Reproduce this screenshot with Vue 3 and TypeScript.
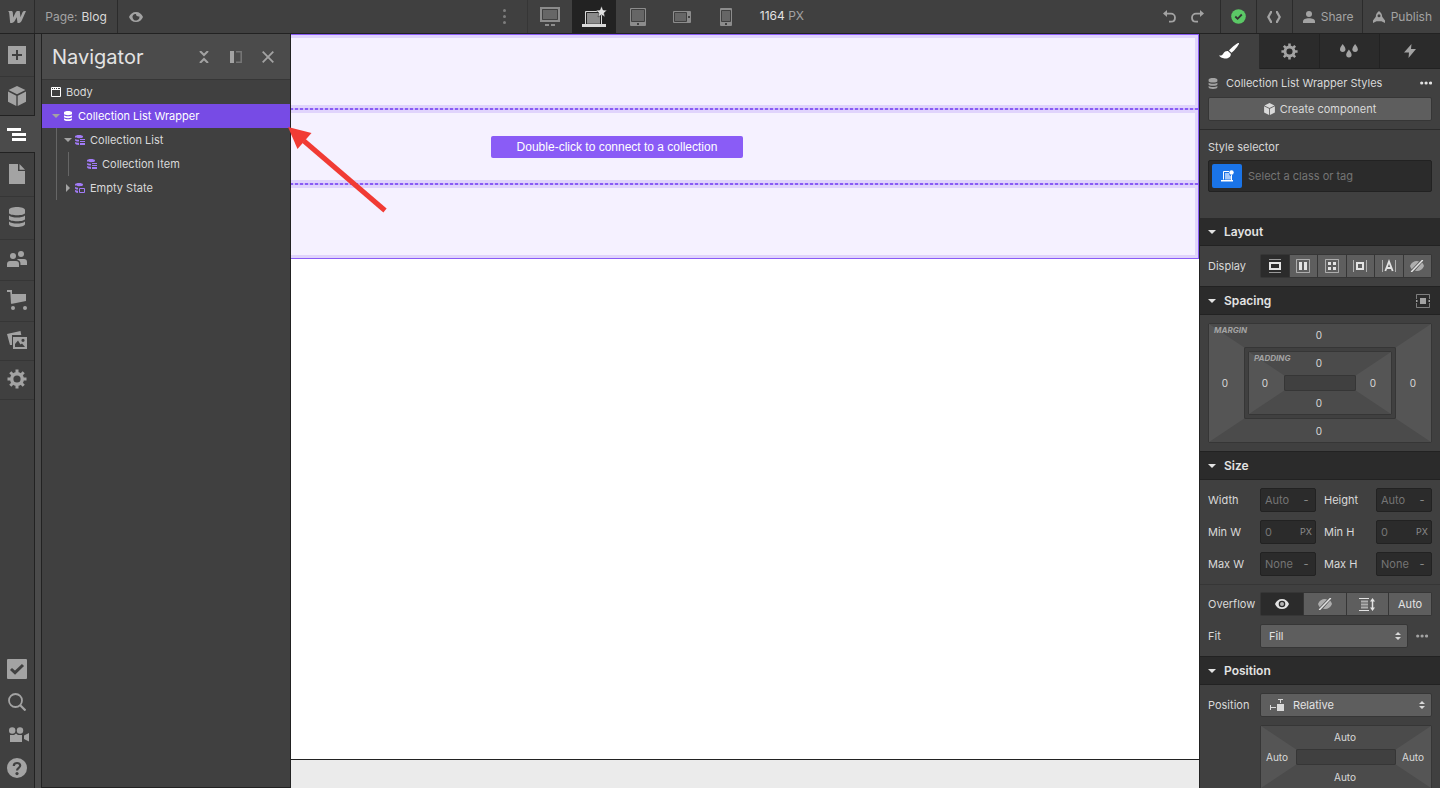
<script setup lang="ts">
import { ref } from 'vue'

interface Icon { id: string; label: string; w: number; h: number; cell?: string }
interface SizeField { label: string; value: string; unit: string }

const railTop: Icon[] = [
  { id: 'plus', label: 'Add elements', w: 18, h: 18, cell: 'h43' },
  { id: 'cube', label: 'Components', w: 18, h: 20, cell: 'h39' },
  { id: 'nav', label: 'Navigator', w: 20, h: 13, cell: 'h37' },
  { id: 'page', label: 'Pages', w: 16, h: 20, cell: 'h43 raised tall' },
  { id: 'db', label: 'CMS collections', w: 16, h: 20, cell: 'h43 raised' },
  { id: 'users', label: 'Users', w: 20, h: 16, cell: 'h41 raised' },
  { id: 'cart', label: 'Ecommerce', w: 20, h: 20, cell: 'h41 raised' },
  { id: 'images', label: 'Assets', w: 20, h: 18, cell: 'h39 raised' },
  { id: 'gear', label: 'Settings', w: 20, h: 20, cell: 'h39 raised' },
]
const railBottom: Icon[] = [
  { id: 'audit', label: 'Audit', w: 20, h: 20 },
  { id: 'search', label: 'Search', w: 18, h: 18 },
  { id: 'video', label: 'Tutorials', w: 20, h: 16 },
  { id: 'help', label: 'Help', w: 20, h: 20 },
]
const devices: Icon[] = [
  { id: 'desktop', label: 'Desktop', w: 20, h: 19 },
  { id: 'laptop', label: 'Base breakpoint', w: 26, h: 22 },
  { id: 'tablet', label: 'Tablet', w: 16, h: 18 },
  { id: 'landscape', label: 'Mobile landscape', w: 18, h: 12 },
  { id: 'phone', label: 'Mobile portrait', w: 12, h: 18 },
]
const tabs: Icon[] = [
  { id: 'brush', label: 'Style', w: 20, h: 16 },
  { id: 'gear', label: 'Element settings', w: 17, h: 17 },
  { id: 'drops', label: 'Style manager', w: 18, h: 14 },
  { id: 'bolt', label: 'Interactions', w: 12, h: 14 },
]
const displays: Icon[] = [
  { id: 'd-block', label: 'Block', w: 14, h: 14 },
  { id: 'd-flex', label: 'Flex', w: 14, h: 14 },
  { id: 'd-grid', label: 'Grid', w: 14, h: 14 },
  { id: 'd-inline-block', label: 'Inline block', w: 14, h: 14 },
  { id: 'd-inline', label: 'Inline', w: 14, h: 14 },
  { id: 'eye-off', label: 'None', w: 14, h: 12 },
]
const sizes: SizeField[] = [
  { label: 'Width', value: 'Auto', unit: '-' },
  { label: 'Height', value: 'Auto', unit: '-' },
  { label: 'Min W', value: '0', unit: 'PX' },
  { label: 'Min H', value: '0', unit: 'PX' },
  { label: 'Max W', value: 'None', unit: '-' },
  { label: 'Max H', value: 'None', unit: '-' },
]
const sides = ['top', 'right', 'bottom', 'left']

const activeRail = ref('nav')
const activeDevice = ref('laptop')
const activeTab = ref('brush')
const activeDisplay = ref('d-block')
const activeOverflow = ref('visible')
const selectedNode = ref('wrapper')
const fit = ref('Fill')
const position = ref('Relative')
</script>

<template>
  <div class="designer">
    <svg class="sprite" aria-hidden="true">
      <symbol id="logo" viewBox="0 0 18 12"><path d="M0 0h3.200c1 0 1.500.5 1.600 1.500l.4 5L7.700 1.300C8.200.3 8.900 0 9.800 0h1.900l.8 6.300L14.300 1.700C14.800.4 15.600 0 18 0L13.800 9.500c-.9 1.900-1.900 2.500-4.300 2.500L8.700 6.300 7 9.500C5.900 11.500 4.800 12 2.200 12L1.300 3C1.100 1.200.9.700 0 0z" fill="currentColor" /></symbol>
      <symbol id="eye" viewBox="0 0 14 10"><path fill-rule="evenodd" d="M7 0c3.300 0 5.800 2 7 5-1.200 3-3.700 5-7 5S1.200 8 0 5c1.200-3 3.700-5 7-5zm0 1.700a3.300 3.300 0 1 0 0 6.600 3.300 3.300 0 0 0 0-6.600z" fill="currentColor" /><circle cx="7" cy="5" r="2" fill="currentColor" opacity=".75" /></symbol>
      <symbol id="eye-top" viewBox="0 0 14 10"><path fill-rule="evenodd" d="M7 0c3.300 0 5.800 2 7 5-1.200 3-3.700 5-7 5S1.200 8 0 5c1.200-3 3.700-5 7-5zM5 2.300a3.400 3.400 0 1 0 5.300 2A2.300 2.300 0 0 1 7 2 3.400 3.400 0 0 0 5 2.300z" fill="currentColor" /></symbol>
      <symbol id="eye-off" viewBox="0 0 14 12"><path d="M0 6c1.300-3.200 4-5 7-5l3 .8L3 10.300C1.700 9.300.6 7.700 0 6zM14 6c-1.300 3.200-4 5-7 5l-2-.3L12 2.600c.9.900 1.600 2 2 3.400z" fill="currentColor" opacity=".6" /><path d="M1 12 12.500 0" stroke="#5e5e5e" stroke-width="3" /><path d="M1.200 12 12.800 0" stroke="currentColor" stroke-width="1.500" /></symbol>
      <symbol id="plus" viewBox="0 0 18 18"><path fill-rule="evenodd" d="M0 0h18v18H0zM8 4v4H4v2h4v4h2v-4h4V8h-4V4z" fill="currentColor" /></symbol>
      <symbol id="cube" viewBox="0 0 18 20"><path d="M9 0l8.400 4L9 8.200.6 4zM0 5.500l8.300 4.200V20L0 15.800zM18 5.500 9.700 9.700V20l8.300-4.200z" fill="currentColor" /></symbol>
      <symbol id="nav" viewBox="0 0 20 13"><path d="M0 0h14v3H0zM5 5h14v3H5zM5 10h14v3H5z" fill="currentColor" /></symbol>
      <symbol id="page" viewBox="0 0 16 20"><path d="M0 0h9v7h7v13H0zM10.500 0 16 5.700h-5.500z" fill="currentColor" /></symbol>
      <symbol id="db" viewBox="0 0 16 20"><path d="M0 3c0-4 16-4 16 0v3c0 3-16 3-16 0zM0 8.500c3 2.700 13 2.700 16 0V12c0 3-16 3-16 0zM0 14.500c3 2.700 13 2.700 16 0V17c0 4-16 4-16 0z" fill="currentColor" /></symbol>
      <symbol id="users" viewBox="0 0 20 16"><circle cx="6" cy="5" r="3" fill="currentColor" /><circle cx="14" cy="3" r="3" fill="currentColor" /><path d="M0 16v-3c0-2 1.500-3 3-3h6c2 0 3 1 3 3v3zM10.500 8H17c2 0 3 1 3 3v3h-6.500c0-3.500-.5-4.500-3-5z" fill="currentColor" /></symbol>
      <symbol id="cart" viewBox="0 0 20 20"><path d="M0 0h5v4h14v7L5.300 13.800H4L3.300 2H0z" fill="currentColor" /><circle cx="6" cy="18" r="2" fill="currentColor" /><circle cx="18" cy="18" r="2" fill="currentColor" /></symbol>
      <symbol id="images" viewBox="0 0 20 18"><path d="M0 3 13.500 0l.8 4H5v10H3z" fill="currentColor" /><path fill-rule="evenodd" d="M6 6h14v12H6zM8 16h10l-3-3.500-1.500 1L11 9.500 8 13zM16 7.700a1.600 1.600 0 1 0 0 3.200 1.600 1.600 0 0 0 0-3.200z" fill="currentColor" /></symbol>
      <symbol id="gear" viewBox="0 0 20 20"><circle cx="10" cy="10" r="5.300" fill="none" stroke="currentColor" stroke-width="3.400" /><path d="M10 .5V4M10 16v3.500M.5 10H4M16 10h3.500M3.300 3.300l2.400 2.400M14.300 14.300l2.400 2.400M3.300 16.700l2.400-2.400M14.300 5.700l2.400-2.400" stroke="currentColor" stroke-width="3" /></symbol>
      <symbol id="audit" viewBox="0 0 20 20"><rect width="20" height="20" rx="1" fill="currentColor" /><path d="M4 10l4 3.600L16 6" fill="none" stroke="#404040" stroke-width="3" /></symbol>
      <symbol id="search" viewBox="0 0 18 18"><circle cx="7.500" cy="7.500" r="6.500" fill="none" stroke="currentColor" stroke-width="1.800" /><path d="M12 12l5.500 5.500" stroke="currentColor" stroke-width="2.200" /></symbol>
      <symbol id="video" viewBox="0 0 20 16"><circle cx="3.200" cy="3.500" r="3.200" fill="currentColor" /><circle cx="11" cy="3.500" r="3.200" fill="currentColor" /><path d="M1 8h4l2-1.500L9 8h4v7H1zM20 6v8.500l-5-2.500V8.500z" fill="currentColor" /></symbol>
      <symbol id="help" viewBox="0 0 20 20"><circle cx="10" cy="10" r="10" fill="currentColor" /><path d="M6.800 8c0-4 6.400-3.800 6.400-.4 0 2.300-3.200 2.300-3.200 5" fill="none" stroke="#404040" stroke-width="2.200" /><circle cx="10" cy="15.600" r="1.600" fill="#404040" /></symbol>
      <symbol id="desktop" viewBox="0 0 20 19"><path d="M1 1h18v13H1z" fill="#666" stroke="currentColor" stroke-width="2" /><path d="M2.500 2.500h15v10h-15z" fill="none" stroke="#404040" /><path d="M5 17h4v2H5zM11 17h4v2h-4z" fill="currentColor" /></symbol>
      <symbol id="laptop" viewBox="0 0 26 22"><path d="M4.500 5.500h16V18h-16z" fill="#8a8a8a" stroke="#d9d9d9" /><path d="M5.500 6.500h14V18h-14z" fill="none" stroke="#222" /><path d="M1 18h24v3H1z" fill="#d9d9d9" /><path d="M20.500 0l1.600 4 3.900.3-3 2.700 1 4-3.500-2.200L17 11l1-4-3-2.700 3.900-.3z" fill="#e3e3e3" stroke="#222" stroke-width=".5" /></symbol>
      <symbol id="tablet" viewBox="0 0 16 18"><rect width="16" height="18" rx="1" fill="currentColor" /><path d="M1.500 1.500h13v12h-13z" fill="#666" stroke="#404040" /><path d="M7 15h2v2H7z" fill="#404040" /></symbol>
      <symbol id="landscape" viewBox="0 0 18 12"><rect width="18" height="12" rx="1" fill="currentColor" /><path d="M1.500 1.500h12v9h-12z" fill="#666" stroke="#404040" /><path d="M15 5h2v2h-2z" fill="#404040" /></symbol>
      <symbol id="phone" viewBox="0 0 12 18"><rect width="12" height="18" rx="1" fill="currentColor" /><path d="M1.500 2.500h9v11h-9z" fill="#666" stroke="#404040" /><path d="M5 15h2v2H5z" fill="#404040" /></symbol>
      <symbol id="undo" viewBox="0 0 13 13"><path d="M0 3.500 4 0v7z" fill="currentColor" /><path d="M3 3.700h5a4 4 0 0 1 4 4c0 2.500-1.500 4-4 4H6" fill="none" stroke="currentColor" stroke-width="1.800" /></symbol>
      <symbol id="ok" viewBox="0 0 15 15"><circle cx="7.500" cy="7.500" r="7.300" fill="#5bc866" /><path d="M4.300 7.500l2.300 2.300 4.200-4.300" fill="none" stroke="#333" stroke-width="1.800" /></symbol>
      <symbol id="code" viewBox="0 0 14 12"><path d="M5 1.200H4L1.300 6 4 10.800h1M9 1.200h1L12.700 6 10 10.800H9" fill="none" stroke="currentColor" stroke-width="2.200" /></symbol>
      <symbol id="person" viewBox="0 0 12 12"><circle cx="6" cy="3" r="3" fill="currentColor" /><path d="M0 12v-1.500C0 8.500 2.500 7.300 6 7.300s6 1.200 6 3.200V12z" fill="currentColor" /></symbol>
      <symbol id="rocket" viewBox="0 0 12 12"><path fill-rule="evenodd" d="M6 0c2 1.300 3.200 3.500 3.200 5.800L12 9.500V12L8.500 10.200h-5L0 12V9.500l2.800-3.700C2.800 3.500 4 1.300 6 0zm0 3.300a1.500 1.500 0 1 0 0 3 1.500 1.500 0 0 0 0-3z" fill="currentColor" /></symbol>
      <symbol id="collapse" viewBox="0 0 10 12"><path d="M1 0l4 4 4-4M1 12l4-4 4 4" fill="none" stroke="currentColor" stroke-width="2" /></symbol>
      <symbol id="dock" viewBox="0 0 12 12"><path d="M0 0h4v12H0z" fill="currentColor" /><path d="M6 .8h5.200v10.400H6" fill="none" stroke="currentColor" stroke-width="1.500" opacity=".5" /></symbol>
      <symbol id="close" viewBox="0 0 12 12"><path d="M.7.7l10.600 10.600M11.300.7.7 11.300" stroke="currentColor" stroke-width="1.800" /></symbol>
      <symbol id="body" viewBox="0 0 10 10"><path d="M.5.5h9v9h-9zM0 2.500h10" fill="none" stroke="currentColor" /><path d="M2 1h1v1H2zM4 1h1v1H4zM6 1h1v1H6z" fill="currentColor" /></symbol>
      <symbol id="list" viewBox="0 0 10 10"><path d="M0 1.500C0-.5 8-.5 8 1.500V2c0 1.600-8 1.600-8 0zM0 4c1 .6 2.500.8 4 .8V6.500C1.500 6.500 0 6 0 5zM0 7c1 .6 2.500.8 4 .8V10C1.500 10 0 9 0 8zM5 4h5v1H5zM5 6h5v1H5zM5 8h5v2H5z" fill="currentColor" /></symbol>
      <symbol id="empty" viewBox="0 0 10 10"><path d="M0 1.500C0-.5 8-.5 8 1.500V2c0 1.600-8 1.600-8 0zM0 4c1 .6 2 .8 3 .8V6.500C1.500 6.500 0 6 0 5zM0 7c1 .6 2 .8 3 .8V10C1.500 10 0 9 0 8z" fill="currentColor" /><path d="M4.500 5.500h5v4h-5z" fill="none" stroke="currentColor" /></symbol>
      <symbol id="brush" viewBox="0 0 20 16"><path d="M20 0c.5 1.500-5 8-7.500 9.800L10 7.500C12 5 18.500-.5 20 0zM9.200 8.200l2.600 2.500C12 14 9 16 5.500 15.500 3 15.200 1 14 0 12.500c2.500.5 3.500-.8 4.500-2.300 1.200-1.700 3-2.400 4.700-2z" fill="currentColor" /></symbol>
      <symbol id="drops" viewBox="0 0 18 14"><path id="drop" d="M2.700 0c1.500 2 2.700 3.800 2.700 5.300a2.700 2.700 0 0 1-5.400 0C0 3.800 1.200 2 2.700 0z" fill="currentColor" /><use href="#drop" x="12.400" /><use href="#drop" x="6.200" y="5.500" /></symbol>
      <symbol id="bolt" viewBox="0 0 12 14"><path d="M7.500 0 7 5h5L4.500 14 5 8.500H0z" fill="currentColor" /></symbol>
      <symbol id="class" viewBox="0 0 13 12"><path d="M2.500 9.500V1.500H8M10.500 5v5" fill="none" stroke="currentColor" /><path d="M4 3h4c0 2 .8 2.800 2 3v3.500H4z" fill="#a5c8f8" /><path d="M0 10h12v1.500H0z" fill="currentColor" /><circle cx="10.500" cy="2.500" r="2.200" fill="currentColor" /></symbol>
      <symbol id="d-block" viewBox="0 0 14 14"><path d="M1 .5h12M1 13.500h12" stroke="currentColor" opacity=".6" /><path d="M2 4h10v6H2z" fill="none" stroke="currentColor" stroke-width="2" /></symbol>
      <symbol id="d-flex" viewBox="0 0 14 14"><path d="M.5.5h13v13H.5z" fill="none" stroke="currentColor" opacity=".6" /><path d="M3 3h3v8H3zM8 3h3v8H8z" fill="currentColor" /></symbol>
      <symbol id="d-grid" viewBox="0 0 14 14"><path d="M.5.5h13v13H.5z" fill="none" stroke="currentColor" opacity=".6" /><path d="M3 3h3v3H3zM8 3h3v3H8zM3 8h3v3H3zM8 8h3v3H8z" fill="currentColor" /></symbol>
      <symbol id="d-inline-block" viewBox="0 0 14 14"><path d="M.5 1v12M13.500 1v12" stroke="currentColor" opacity=".6" /><path d="M4 4h6v6H4z" fill="none" stroke="currentColor" stroke-width="2" /></symbol>
      <symbol id="d-inline" viewBox="0 0 14 14"><path d="M.5 1v12M13.500 1v12" stroke="currentColor" opacity=".6" /><path d="M3.300 12 7 2.500 10.700 12M4.500 9h5" fill="none" stroke="currentColor" stroke-width="1.800" /></symbol>
      <symbol id="center" viewBox="0 0 14 14"><path d="M.5 5V.5h13V5M.5 9v4.500h13V9" fill="none" stroke="currentColor" opacity=".7" /><path d="M4 4h6v6H4zM0 6h1.500v2H0zM12.500 6H14v2h-1.500z" fill="currentColor" /></symbol>
      <symbol id="scroll" viewBox="0 0 16 13"><path d="M0 .5h10M0 12.500h10" stroke="currentColor" /><path d="M2 3.500h7M2 6.500h7M2 9.500h7" stroke="currentColor" stroke-width="2" opacity=".6" /><path d="M13.500 2v9" stroke="currentColor" stroke-width="1.500" /><path d="M13.500 0 16 3.500h-5zM13.500 13 16 9.500h-5z" fill="currentColor" /></symbol>
      <symbol id="relative" viewBox="0 0 14 12"><path d="M7 5h7v7H7z" fill="currentColor" /><path d="M8 .5h5M10.500 1v3M.5 6v5M1 8.500h5" stroke="currentColor" /></symbol>
      <symbol id="dots" viewBox="0 0 12 4"><circle cx="1.700" cy="2" r="1.600" fill="currentColor" /><circle cx="6.100" cy="2" r="1.600" fill="currentColor" /><circle cx="10.500" cy="2" r="1.600" fill="currentColor" /></symbol>
      <symbol id="caret" viewBox="0 0 8 4"><path d="M0 0h8L4 4z" fill="currentColor" /></symbol>
      <symbol id="updown" viewBox="0 0 6 8"><path d="M0 3h6L3 0zM0 5h6L3 8z" fill="currentColor" /></symbol>
    </svg>

    <header class="topbar">
      <button class="logo" aria-label="Webflow menu"><svg width="18" height="12"><use href="#logo" /></svg></button>
      <button class="page-name">Page: <b>Blog</b></button>
      <button class="preview" aria-label="Preview"><svg width="14" height="10"><use href="#eye-top" /></svg></button>
      <div class="devices">
        <button class="more" aria-label="More breakpoints"><i></i><i></i><i></i></button>
        <button v-for="d in devices" :key="d.id" class="device" :class="{ on: activeDevice === d.id }" :aria-label="d.label" @click="activeDevice = d.id">
          <svg :width="d.w" :height="d.h"><use :href="'#' + d.id" /></svg>
        </button>
        <p class="canvas-width"><b>1164</b> PX</p>
      </div>
      <div class="actions">
        <button class="history" aria-label="Undo"><svg width="13" height="13"><use href="#undo" /></svg></button>
        <button class="history redo" aria-label="Redo"><svg width="13" height="13"><use href="#undo" /></svg></button>
        <button class="action icon-only" aria-label="Saved"><svg width="15" height="15"><use href="#ok" /></svg></button>
        <button class="action icon-only" aria-label="Export code"><svg width="14" height="12"><use href="#code" /></svg></button>
        <button class="action"><svg width="12" height="12"><use href="#person" /></svg>Share</button>
        <button class="action"><svg width="12" height="12"><use href="#rocket" /></svg>Publish</button>
      </div>
    </header>

    <div class="workspace">
      <nav class="rail">
        <button v-for="r in railTop" :key="r.id" class="rail-item" :class="[r.cell, { on: activeRail === r.id }]" :aria-label="r.label" @click="activeRail = r.id">
          <svg :width="r.w" :height="r.h"><use :href="'#' + r.id" /></svg>
        </button>
        <div class="rail-bottom">
          <button v-for="r in railBottom" :key="r.id" :class="r.id" :aria-label="r.label"><svg :width="r.w" :height="r.h"><use :href="'#' + r.id" /></svg></button>
        </div>
      </nav>

      <main class="stage">
        <section class="page-canvas">
          <div class="collection">
            <div class="slot"></div>
            <div class="slot"><button class="connect">Double-click to connect to a collection</button></div>
            <div class="slot"></div>
          </div>
        </section>
        <footer class="crumbs"></footer>

        <aside class="navigator">
          <div class="nav-panel">
            <div class="nav-head">
              <h1>Navigator</h1>
              <button aria-label="Collapse all"><svg width="10" height="12"><use href="#collapse" /></svg></button>
              <button aria-label="Pin panel"><svg width="12" height="12"><use href="#dock" /></svg></button>
              <button aria-label="Close"><svg width="12" height="12"><use href="#close" /></svg></button>
            </div>
            <button class="node root" :class="{ on: selectedNode === 'body' }" @click="selectedNode = 'body'"><svg width="10" height="10"><use href="#body" /></svg>Body</button>
            <button class="node" :class="{ on: selectedNode === 'wrapper' }" @click="selectedNode = 'wrapper'"><svg class="tw" width="8" height="4"><use href="#caret" /></svg><svg width="10" height="10"><use href="#db" /></svg>Collection List Wrapper</button>
            <div class="branch">
              <button class="node tint" :class="{ on: selectedNode === 'list' }" @click="selectedNode = 'list'"><svg class="tw" width="8" height="4"><use href="#caret" /></svg><svg width="10" height="10"><use href="#list" /></svg>Collection List</button>
              <div class="branch">
                <button class="node leaf tint" :class="{ on: selectedNode === 'item' }" @click="selectedNode = 'item'"><svg width="10" height="10"><use href="#list" /></svg>Collection Item</button>
              </div>
              <button class="node tint" :class="{ on: selectedNode === 'empty' }" @click="selectedNode = 'empty'"><svg class="tw shut" width="8" height="4"><use href="#caret" /></svg><svg width="10" height="10"><use href="#empty" /></svg>Empty State</button>
            </div>
          </div>
        </aside>

        <svg class="arrow" width="100" height="88" viewBox="0 0 100 88" aria-hidden="true">
          <path d="M16 14 97 83.500" stroke="#f13b34" stroke-width="5" />
          <path d="M0 0l23.500 6L9.500 22z" fill="#f13b34" />
        </svg>
      </main>

      <aside class="styles">
        <div class="tabs">
          <button v-for="t in tabs" :key="t.id" :class="{ on: activeTab === t.id }" :aria-label="t.label" @click="activeTab = t.id"><svg :width="t.w" :height="t.h"><use :href="'#' + t.id" /></svg></button>
        </div>
        <div class="element">
          <div class="element-title"><svg width="10" height="11"><use href="#db" /></svg><span>Collection List Wrapper Styles</span><button aria-label="More"><svg width="12" height="4"><use href="#dots" /></svg></button></div>
          <button class="create"><svg width="11" height="12"><use href="#cube" /></svg>Create component</button>
        </div>
        <div class="selector">
          <label for="class-input">Style selector</label>
          <div class="selector-box">
            <button aria-label="Breakpoint state"><svg width="13" height="12"><use href="#class" /></svg></button>
            <input id="class-input" placeholder="Select a class or tag">
          </div>
        </div>

        <h2><button><svg width="8" height="4"><use href="#caret" /></svg>Layout</button></h2>
        <div class="group">
          <div class="row">
            <span class="name">Display</span>
            <div class="segments">
              <button v-for="d in displays" :key="d.id" :class="{ on: activeDisplay === d.id }" :aria-label="d.label" @click="activeDisplay = d.id"><svg :width="d.w" :height="d.h"><use :href="'#' + d.id" /></svg></button>
            </div>
          </div>
        </div>

        <h2><button><svg width="8" height="4"><use href="#caret" /></svg>Spacing</button><button class="center" aria-label="Center element"><svg width="14" height="14"><use href="#center" /></svg></button></h2>
        <div class="group">
          <div class="ring outer">
            <em>MARGIN</em>
            <button v-for="s in sides" :key="s" :class="s" :aria-label="'Margin ' + s">0</button>
            <div class="hole">
              <div class="ring inner">
                <em>PADDING</em>
                <button v-for="s in sides" :key="s" :class="s" :aria-label="'Padding ' + s">0</button>
                <div class="hole core"></div>
              </div>
            </div>
          </div>
        </div>

        <h2><button><svg width="8" height="4"><use href="#caret" /></svg>Size</button></h2>
        <div class="group size-grid">
          <template v-for="f in sizes" :key="f.label">
            <label class="name" :for="f.label">{{ f.label }}</label>
            <div class="field"><input :id="f.label" :placeholder="f.value"><button :class="{ px: f.unit === 'PX' }" :aria-label="f.label + ' unit'">{{ f.unit }}</button></div>
          </template>
        </div>
        <div class="group ruled">
          <div class="row">
            <span class="name">Overflow</span>
            <div class="segments wide">
              <button :class="{ on: activeOverflow === 'visible' }" aria-label="Visible" @click="activeOverflow = 'visible'"><svg width="14" height="10"><use href="#eye" /></svg></button>
              <button :class="{ on: activeOverflow === 'hidden' }" aria-label="Hidden" @click="activeOverflow = 'hidden'"><svg width="14" height="12"><use href="#eye-off" /></svg></button>
              <button :class="{ on: activeOverflow === 'scroll' }" aria-label="Scroll" @click="activeOverflow = 'scroll'"><svg width="16" height="13"><use href="#scroll" /></svg></button>
              <button :class="{ on: activeOverflow === 'auto' }" @click="activeOverflow = 'auto'">Auto</button>
            </div>
          </div>
          <div class="row">
            <label class="name" for="fit">Fit</label>
            <div class="drop">
              <select id="fit" v-model="fit"><option>Fill</option><option>Contain</option><option>Cover</option></select>
              <svg class="updown" width="6" height="8"><use href="#updown" /></svg>
            </div>
            <button class="fit-more" aria-label="Fit options"><svg width="12" height="4"><use href="#dots" /></svg></button>
          </div>
        </div>

        <h2><button><svg width="8" height="4"><use href="#caret" /></svg>Position</button></h2>
        <div class="group">
          <div class="row">
            <label class="name" for="position">Position</label>
            <div class="drop">
              <svg class="lead" width="14" height="12"><use href="#relative" /></svg>
              <select id="position" v-model="position" class="with-lead"><option>Relative</option><option>Static</option><option>Absolute</option></select>
              <svg class="updown" width="6" height="8"><use href="#updown" /></svg>
            </div>
          </div>
          <div class="ring offset">
            <button v-for="s in sides" :key="s" :class="s" :aria-label="'Offset ' + s">Auto</button>
            <div class="hole core"></div>
          </div>
        </div>
      </aside>
    </div>
  </div>
</template>

<style>
body { margin: 0; background: #404040; }
</style>

<style scoped>
* { box-sizing: border-box; }
.designer { display: flex; flex-direction: column; height: 100vh; overflow: hidden; font: 11px/16px Inter, "Liberation Sans", sans-serif; color: #d9d9d9; background: #404040; }
.sprite { display: none; }
svg { display: block; flex: none; }
button { display: flex; align-items: center; justify-content: center; margin: 0; padding: 0; border: 0; background: none; color: inherit; font: inherit; cursor: pointer; white-space: nowrap; }
h1, h2, p { margin: 0; }

.topbar { display: flex; flex: none; height: 34px; border-bottom: 1px solid #222; color: #a3a3a3; font-size: 12px; }
.logo { width: 35px; border-right: 1px solid #2b2b2b; }
.page-name { width: 83px; gap: 4px; border-right: 1px solid #2b2b2b; }
.page-name b { font-weight: 400; color: #d9d9d9; }
.preview { width: 36px; }
.devices { display: flex; margin: 0 auto; padding-right: 12px; }
.more { flex-direction: column; gap: 3px; width: 34px; padding-right: 12px; border-right: 1px solid #363636; }
.more i { width: 3px; height: 3px; border-radius: 2px; background: #7d7d7d; }
.device { width: 44px; color: #8c8c8c; }
.device.on { background: #222; }
.canvas-width { padding: 8px 0 0 12px; }
.canvas-width b { font-weight: 400; color: #e3e3e3; }
.actions { display: flex; }
.history { width: 28px; }
.redo { margin-right: 8px; }
.redo svg { transform: scaleX(-1); }
.action { gap: 6px; padding: 0 8px 0 10px; border-left: 1px solid #2b2b2b; }
.action.icon-only { width: 36px; padding: 0; }

.workspace { display: flex; flex: 1; min-height: 0; }
.rail { display: flex; flex-direction: column; flex: none; width: 35px; border-right: 1px solid #222; color: #a3a3a3; }
.rail-item { flex: none; border-bottom: 1px solid #363636; }
.rail-item.on { position: relative; margin-right: -1px; padding-right: 1px; background: #4b4b4b; color: #fff; border-bottom-color: #222; box-shadow: 0 -1px #222; z-index: 2; }
.h37 { height: 37px; }
.h39 { height: 39px; }
.h41 { height: 41px; }
.h43 { height: 43px; }
.tall { height: 44px; }
.raised { padding-bottom: 2px; }
.rail-bottom { margin-top: auto; padding-bottom: 4px; }
.rail-bottom button { width: 34px; height: 33px; }
.rail-bottom .video { padding-left: 4px; }

.stage { position: relative; display: flex; flex-direction: column; flex: 1; min-width: 0; }
.page-canvas { flex: 1; background: #fff; }
.collection { position: relative; background: #e0d4fc; }
.collection::after { content: ""; position: absolute; inset: 0; border: 1px solid #8a5cf6; pointer-events: none; }
.slot { display: flex; align-items: center; justify-content: center; height: 75px; border: 4px solid #e0d4fc; background: #f5f1ff; position: relative; }
.slot + .slot::before { content: ""; position: absolute; left: -4px; right: -4px; top: -5px; height: 2px; background: repeating-linear-gradient(90deg, #8a5cf6 0 3px, #cdbafa 3px 5px); }
.connect { height: 22px; padding: 0 26px; border-radius: 2px; background: #8a5cf6; color: #fff; font: 12px/16px "Liberation Sans", Arial, sans-serif; }
.crumbs { height: 29px; border-top: 1px solid #222; background: #ebebeb; }

.navigator { position: absolute; left: 0; top: 0; bottom: 0; width: 256px; padding-left: 6px; background: #4b4b4b; }
.nav-panel { height: 100%; border: solid #222; border-width: 0 1px 1px; background: #404040; }
.nav-head { display: flex; align-items: center; height: 46px; padding: 0 6px 0 10px; background: #4b4b4b; border-bottom: 1px solid #363636; color: #a3a3a3; }
.nav-head h1 { flex: 1; font-size: 20px; line-height: 28px; font-weight: 400; color: #e3e3e3; }
.nav-head button { width: 32px; height: 32px; }
.node { width: 100%; height: 24px; justify-content: flex-start; gap: 5px; padding-left: 10px; text-align: left; }
.node.root { padding-left: 9px; }
.node.on { background: #774be5; color: #fff; }
.node svg { color: #fff; }
.node.tint svg { color: #a27bf8; }
.node svg.tw, .node.tint svg.tw { margin-right: -2px; color: #a3a3a3; }
.node svg.shut { transform: rotate(-90deg); }
.branch { margin-left: 14px; border-left: 1px solid #666; }
.branch .node { padding-left: 7px; }
.branch .branch { margin-left: 11px; }
.branch .node.leaf { padding-left: 18px; }
.arrow { position: absolute; left: 253px; top: 93px; }

.styles { flex: none; width: 241px; border-left: 1px solid #222; background: #404040; }
.tabs { display: grid; grid-template-columns: repeat(4, 1fr); height: 35px; background: #2b2b2b; color: #a3a3a3; }
.tabs button { padding-right: 1px; border: solid #222; border-width: 0 1px 1px 0; }
.tabs button:last-child { border-right: 0; }
.tabs button.on { background: #404040; color: #fff; border-bottom: 0; padding-bottom: 2px; border-right-color: #2b2b2b; }
.element { padding: 6px 8px 8px; border-bottom: 1px solid #2b2b2b; }
.element-title { display: flex; align-items: center; gap: 8px; height: 16px; margin-bottom: 6px; color: #a3a3a3; }
.element-title span { flex: 1; color: #d9d9d9; }
.element-title button { color: #e3e3e3; }
.create { gap: 5px; width: 100%; height: 24px; border: 1px solid #363636; border-radius: 2px; background: #5e5e5e; }
.selector { padding: 9px 8px 25px; }
.selector label { display: block; margin-bottom: 5px; }
.selector-box { display: flex; align-items: center; height: 32px; padding: 0 3px; border: 1px solid #222; border-radius: 2px; background: #2b2b2b; }
.selector-box button { width: 30px; height: 24px; border-radius: 2px; background: #1a74e8; color: #fff; }
input { min-width: 0; margin: 0; padding: 0; border: 0; outline: 0; background: none; font: inherit; color: #d9d9d9; }
input::placeholder { color: #757575; opacity: 1; }
.selector-box input { flex: 1; padding-left: 6px; }

h2 { display: flex; align-items: center; justify-content: space-between; height: 29px; padding: 0 8px; border: solid #222; border-width: 1px 0; background: #2b2b2b; font-size: 12px; line-height: 16px; font-weight: 600; color: #e3e3e3; }
.selector + h2 { border-top-color: #404040; }
h2 button { gap: 8px; }
h2 .center { width: 18px; height: 18px; color: #a3a3a3; }
.group { display: flex; flex-direction: column; gap: 8px; padding: 8px; }
.ruled { padding-top: 7px; border-top: 1px solid #363636; }
.row { display: grid; grid-template-columns: 44px 1fr auto; gap: 8px; align-items: center; height: 24px; }
.row > :nth-child(2):last-child { grid-column: 2 / 4; }
.segments { display: grid; grid-template-columns: repeat(6, 1fr); gap: 1px; height: 24px; padding: 1px; border-radius: 2px; background: #363636; }
.segments.wide { grid-template-columns: repeat(4, 1fr); }
.segments button { background: #5e5e5e; color: #e3e3e3; }
.segments button.on { background: #2b2b2b; }
.ring { position: relative; display: grid; grid-template: 24px 1fr 24px / 36px 1fr 36px; border-radius: 2px; outline: 1px solid #363636; outline-offset: -1px; }
.ring::before { content: ""; position: absolute; inset: 1px; border: solid; border-width: 24px 36px; border-color: #4b4b4b #555; pointer-events: none; }
.ring > * { position: relative; }
.ring button { padding-right: 2px; font-size: 10px; }
.ring em { position: absolute; left: 6px; top: 2px; font-size: 8px; line-height: 10px; font-weight: 700; color: #a3a3a3; z-index: 1; }
.outer { height: 120px; }
.top { grid-area: 1 / 2; }
.right { grid-area: 2 / 3; }
.bottom { grid-area: 3 / 2; }
.left { grid-area: 2 / 1; }
.hole { grid-area: 2 / 2; padding: 4px; border-radius: 2px; background: #404040; box-shadow: inset 0 0 0 1px #363636; }
.hole .ring { height: 100%; }
.offset { height: 64px; margin-left: 52px; }
.size-grid { display: grid; grid-template-columns: 44px 1fr 44px 1fr; align-items: center; }
.name { white-space: nowrap; }
.field { display: flex; align-items: center; height: 24px; padding: 0 3px 0 4px; border: 1px solid #222; border-radius: 2px; background: #2b2b2b; color: #8c8c8c; }
.field input { flex: 1; width: 0; }
.field button { min-width: 12px; }
.field .px { font-size: 9px; }
.drop { position: relative; height: 24px; }
select { appearance: none; width: 100%; height: 24px; margin: 0; padding: 0 8px; border: 1px solid #363636; border-radius: 2px; background: #5e5e5e; font: inherit; color: #e3e3e3; }
select.with-lead { padding-left: 32px; }
.updown { position: absolute; right: 7px; top: 8px; pointer-events: none; }
.lead { position: absolute; left: 10px; top: 6px; pointer-events: none; }
.fit-more { width: 16px; justify-content: flex-start; color: #a3a3a3; }
</style>
